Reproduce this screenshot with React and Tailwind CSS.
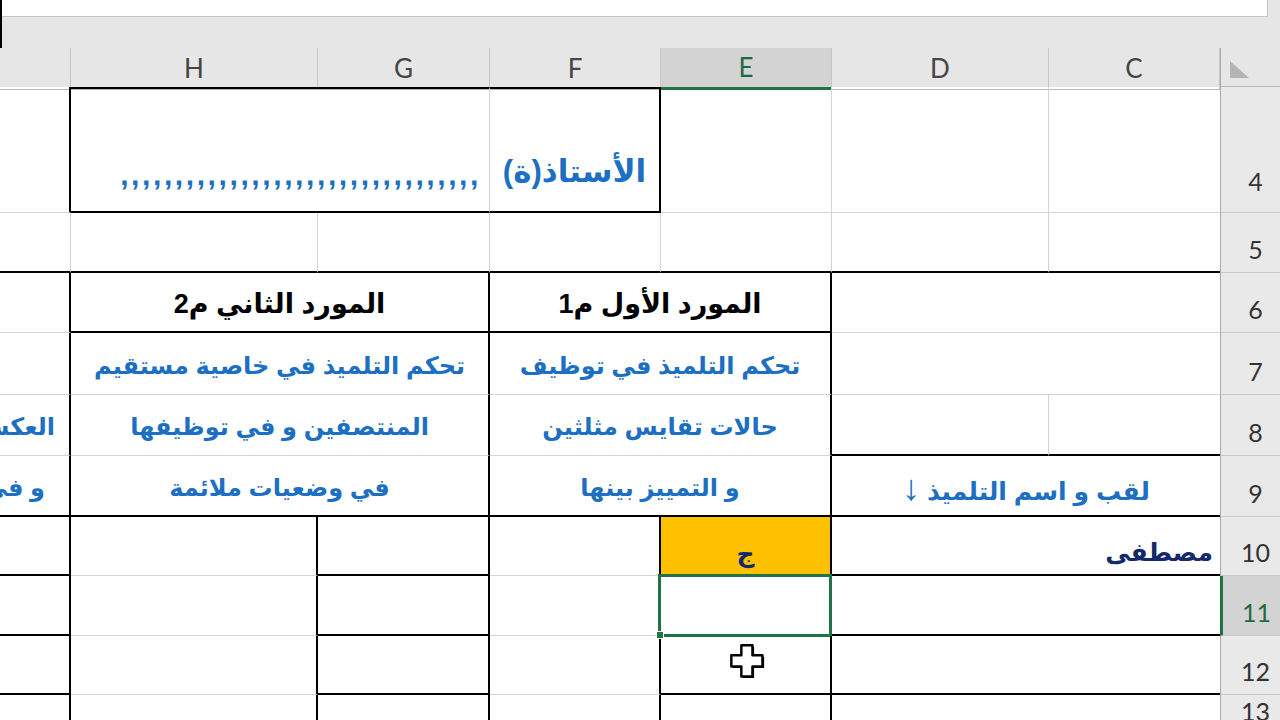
import React from "react";

// خطوط الشبكة
const gR = "border-r border-r-[#d4d4d4]";
const kR = "border-r-2 border-r-black";
const gB = "border-b border-b-[#d4d4d4]";
const kB = "border-b-2 border-b-black";

const blue = "font-bold text-[#1c6fc2] text-[24px]";
const dark = "font-bold text-black text-[27px]";
const navy = "font-bold text-[#13296b] text-[25px]";

const Cell = ({ className = "", children, dir = "rtl" }) => (
  <div dir={dir} className={`flex overflow-hidden whitespace-nowrap ${className}`}>
    {children}
  </div>
);

const RowHead = ({ n, selected, pb = "pb-[10px]" }) => (
  <div
    className={`flex items-end justify-center pl-[10px] ${pb} text-[25px] leading-none font-['Lato',sans-serif] border-b border-b-[#c8c8c8] border-l ${
      selected
        ? "bg-[#d3d3d3] text-[#1e6b41] border-l-[3px] border-l-[#217346]"
        : "bg-[#e9e9e9] text-[#333] border-l-[#a9a9a9]"
    }`}
  >
    {n}
  </div>
);

const ColHead = ({ label, selected }) => (
  <div
    className={`flex items-center justify-center text-[26px] font-['Lato',sans-serif] border-r border-r-[#c6c6c6] ${
      selected
        ? "bg-[#d3d3d3] text-[#1e6b41] border-b-[3px] border-b-[#217346]"
        : "text-[#444] border-b border-b-[#b9b9b9]"
    }`}
  >
    {label}
  </div>
);

const PlusCursor = () => (
  <svg width="40" height="40" viewBox="0 0 36 36" className="absolute left-[67px] top-[6px]">
    <path
      d="M12 3h10v9h9v10h-9v9H12v-9H3V12h9z"
      transform="translate(1.5 1.5)"
      fill="#000"
    />
    <path
      d="M12 3h10v9h9v10h-9v9H12v-9H3V12h9z"
      fill="#fff"
      stroke="#000"
      strokeWidth="2.2"
      strokeLinejoin="round"
    />
  </svg>
);

export default function App() {
  return (
    <div className="w-[1280px] h-[720px] overflow-hidden bg-white font-['Liberation_Sans','DejaVu_Sans',sans-serif]">
      {/* شريط الصيغة */}
      <div className="flex h-[17px] border-l-2 border-l-black bg-[#e6e6e6]">
        <div className="flex-1 bg-white border-b border-b-[#c6c6c6] border-r border-r-[#c6c6c6]" />
        <div className="w-[12px]" />
      </div>
      <div className="h-[31px] bg-[#e6e6e6] border-l-2 border-l-black" />

      <div className="grid grid-cols-[71px_247px_172px_171px_171px_217px_171px_60px] grid-rows-[39px_126px_60px_60px_62px_61px_61px_59px_60px_59px_40px]">
        {/* رؤوس الأعمدة */}
        <div className="bg-[#e6e6e6] col-span-7 grid grid-cols-[71px_247px_172px_171px_171px_217px_171px]">
          <ColHead label="" />
          <ColHead label="H" />
          <ColHead label="G" />
          <ColHead label="F" />
          <ColHead label="E" selected />
          <ColHead label="D" />
          <ColHead label="C" />
        </div>
        <div className="bg-[#e6e6e6] border-b border-b-[#b9b9b9] border-l border-l-[#a9a9a9] pl-[9px] pt-[13px]">
          <svg width="19" height="17" viewBox="0 0 19 17">
            <path d="M0 0L19 17H0z" fill="#b4b4b4" />
          </svg>
        </div>

        {/* الصف 4 */}
        <Cell className={`${kR} ${gB}`} />
        <Cell className={`col-span-2 ${gR} ${kB} border-t-2 border-t-black items-end justify-start pr-[8px] pb-[14px]`}>
          <span className="font-bold text-[#1c6fc2] text-[30px] tracking-[2.6px]">
            ,,,,,,,,,,,,,,,,,,,,,,,,,,,,,,,,,
          </span>
        </Cell>
        <Cell className={`${kR} ${kB} border-t-2 border-t-black items-end justify-center pb-[16px]`}>
          <span className="font-bold text-[#1c6fc2] text-[31px]">الأستاذ(ة)</span>
        </Cell>
        <Cell className={`${gR} ${gB}`} />
        <Cell className={`${gR} ${gB}`} />
        <Cell className={`${gB}`} />
        <RowHead n="4" pb="pb-[18px]" />

        {/* الصف 5 */}
        <Cell className={`${gR} ${kB}`} />
        <Cell className={`${gR} ${kB}`} />
        <Cell className={`${gR} ${kB}`} />
        <Cell className={`${gR} ${kB}`} />
        <Cell className={`${gR} ${kB}`} />
        <Cell className={`${gR} ${kB}`} />
        <Cell className={`${kB}`} />
        <RowHead n="5" />

        {/* الصف 6 */}
        <Cell className={`${kR} ${gB}`} />
        <Cell className={`col-span-2 ${kR} ${kB} items-center justify-center pt-[4px]`}>
          <span className={dark}>المورد الثاني  م2</span>
        </Cell>
        <Cell className={`col-span-2 ${kR} ${kB} items-center justify-center pt-[4px]`}>
          <span className={dark}>المورد الأول  م1</span>
        </Cell>
        <Cell className={`col-span-2 ${gB}`} />
        <RowHead n="6" />

        {/* الصف 7 */}
        <Cell className={`${kR} ${gB}`} />
        <Cell className={`col-span-2 ${kR} ${gB} items-center justify-center pt-[4px]`}>
          <span className={blue}>تحكم التلميذ في خاصية مستقيم</span>
        </Cell>
        <Cell className={`col-span-2 ${kR} ${gB} items-center justify-center pt-[4px]`}>
          <span className={blue}>تحكم التلميذ في توظيف</span>
        </Cell>
        <Cell className={`col-span-2 ${gB}`} />
        <RowHead n="7" />

        {/* الصف 8 */}
        <Cell className={`${kR} ${gB} items-center pr-[14px] pt-[4px]`}>
          <span className={blue}>العكسية</span>
        </Cell>
        <Cell className={`col-span-2 ${kR} ${gB} items-center justify-center pt-[4px]`}>
          <span className={blue}>المنتصفين و في توظيفها</span>
        </Cell>
        <Cell className={`col-span-2 ${kR} ${gB} items-center justify-center pt-[4px]`}>
          <span className={blue}>حالات تقايس مثلثين</span>
        </Cell>
        <Cell className={`${gR} ${kB}`} />
        <Cell className={`${kB}`} />
        <RowHead n="8" />

        {/* الصف 9 */}
        <Cell className={`${kR} ${kB} items-center pr-[24px] pt-[4px]`}>
          <span className={blue}>و في</span>
        </Cell>
        <Cell className={`col-span-2 ${kR} ${kB} items-center justify-center pt-[4px]`}>
          <span className={blue}>في وضعيات ملائمة</span>
        </Cell>
        <Cell className={`col-span-2 ${kR} ${kB} items-center justify-center pt-[4px]`}>
          <span className={blue}>و التمييز بينها</span>
        </Cell>
        <Cell className={`col-span-2 ${kB} items-center justify-center pt-[4px]`}>
          <span className="font-bold text-[#1c6fc2] text-[25px]">
            لقب و اسم التلميذ <span className="text-[36px] font-black">↓</span>
          </span>
        </Cell>
        <RowHead n="9" />

        {/* الصف 10 */}
        <Cell className={`${kR} ${kB}`} />
        <Cell className={`${kR} ${gB}`} />
        <Cell className={`${kR} ${kB}`} />
        <Cell className={`${kR} ${gB}`} />
        <Cell className={`${kR} ${kB} bg-[#ffc000] items-end justify-center pb-[2px]`}>
          <span className={navy}>ج</span>
        </Cell>
        <Cell className={`col-span-2 ${kB} items-end justify-start pr-[7px] pb-[3px]`}>
          <span className={navy}>مصطفى</span>
        </Cell>
        <RowHead n="10" />

        {/* الصف 11 */}
        <Cell className={`${kR} ${kB}`} />
        <Cell className={`${kR} ${gB}`} />
        <Cell className={`${kR} ${kB}`} />
        <Cell className={`${kR} ${gB}`} />
        <div className={`relative ${kR} ${kB}`}>
          <div className="absolute -top-[2px] -left-[3px] -right-[2px] -bottom-[3px] border-[3px] border-[#217346]" />
          <div className="absolute -left-[5px] -bottom-[5px] w-[8px] h-[8px] bg-[#217346] border border-white" />
        </div>
        <Cell className={`col-span-2 ${kB}`} />
        <RowHead n="11" selected />

        {/* الصف 12 */}
        <Cell className={`${kR} ${kB}`} />
        <Cell className={`${kR} ${gB}`} />
        <Cell className={`${kR} ${kB}`} />
        <Cell className={`${kR} ${gB}`} />
        <div className={`relative ${kR} ${kB}`}>
          <PlusCursor />
        </div>
        <Cell className={`col-span-2 ${kB}`} />
        <RowHead n="12" />

        {/* الصف 13 */}
        <Cell className={`${kR}`} />
        <Cell className={`${kR}`} />
        <Cell className={`${kR}`} />
        <Cell className={`${kR}`} />
        <Cell className={`${kR}`} />
        <Cell className="col-span-2" />
        <RowHead n="13" />
      </div>
    </div>
  );
}
